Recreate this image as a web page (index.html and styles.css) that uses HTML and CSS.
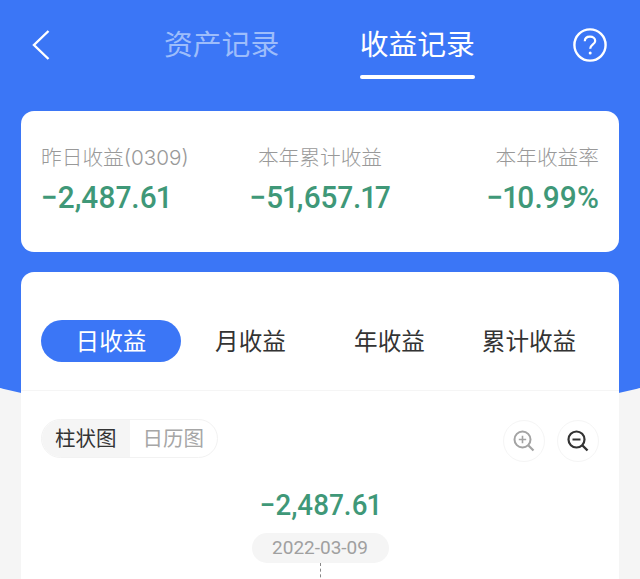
FILE: index.html
```html
<!DOCTYPE html>
<html lang="zh-CN">
<head>
    <meta charset="UTF-8">
    <meta name="viewport" content="width=device-width, initial-scale=1.0">
    <title>收益记录</title>
    <link rel="stylesheet" href="styles.css">
</head>
<body>
    <div class="page">
        <header class="nav">
            <svg class="nav-back" width="18" height="30" viewBox="0 0 18 30">
                <path d="M16.5 1 L2 15 L16.5 29" fill="none" stroke="#fff" stroke-width="2.4"/>
            </svg>
            <div class="nav-tabs">
                <span class="nav-tab">资产记录</span>
                <span class="nav-tab nav-tab-active">收益记录</span>
            </div>
            <svg class="nav-help" width="34" height="34" viewBox="0 0 34 34">
                <circle cx="17" cy="17" r="15.6" fill="none" stroke="#fff" stroke-width="2.4"/>
                <path d="M11.8 13.2 C11.8 10 14.2 8.6 17 8.6 C20 8.6 22.2 10.4 22.2 13 C22.2 16.4 17.2 16.6 17.2 20.8" fill="none" stroke="#fff" stroke-width="2.2"/>
                <circle cx="17.2" cy="25" r="1.5" fill="#fff"/>
            </svg>
        </header>

        <section class="summary">
            <div class="stat">
                <div class="stat-label">昨日收益(0309)</div>
                <div class="stat-value">−2,487.61</div>
            </div>
            <div class="stat stat-center">
                <div class="stat-label">本年累计收益</div>
                <div class="stat-value">−51,657.17</div>
            </div>
            <div class="stat stat-right">
                <div class="stat-label">本年收益率</div>
                <div class="stat-value">−10.99%</div>
            </div>
        </section>

        <section class="panel">
            <div class="period-tabs">
                <span class="period-tab period-tab-active">日收益</span>
                <span class="period-tab">月收益</span>
                <span class="period-tab">年收益</span>
                <span class="period-tab">累计收益</span>
            </div>

            <div class="chart-tools">
                <div class="segment">
                    <span class="segment-item segment-item-active">柱状图</span>
                    <span class="segment-item">日历图</span>
                </div>
                <div class="zoom-btns">
                    <span class="zoom-btn">
                        <svg width="22" height="22" viewBox="0 0 22 22">
                            <circle cx="9.5" cy="9.5" r="8" fill="none" stroke="#a3a3a3" stroke-width="2"/>
                            <path d="M15.5 15.5 L20.5 20.5" stroke="#a3a3a3" stroke-width="2.2"/>
                            <path d="M5.8 9.5 H13.2 M9.5 5.8 V13.2" stroke="#a3a3a3" stroke-width="1.6"/>
                        </svg>
                    </span>
                    <span class="zoom-btn">
                        <svg width="22" height="22" viewBox="0 0 22 22">
                            <circle cx="9.5" cy="9.5" r="8" fill="none" stroke="#333" stroke-width="2.2"/>
                            <path d="M15.5 15.5 L20.5 20.5" stroke="#333" stroke-width="2.4"/>
                            <path d="M5.5 9.5 H13.5" stroke="#333" stroke-width="2"/>
                        </svg>
                    </span>
                </div>
            </div>

            <div class="chart-head">
                <div class="chart-value">−2,487.61</div>
                <div class="chart-date">2022-03-09</div>
                <div class="chart-line"></div>
            </div>
        </section>
    </div>
</body>
</html>
```

FILE: styles.css
```css
html, body {
    margin: 0;
    height: 100%;
    overflow: hidden;
}
body {
    font-family: "Noto Sans CJK SC", Roboto, sans-serif;
    background-color: #f5f5f5;
}
.page {
    position: relative;
    height: 579px;
    overflow: hidden;
    padding: 0 21px 0 21px;
    box-sizing: border-box;
}
/* blue backdrop with the curved bottom edge */
.page::before {
    content: "";
    position: absolute;
    z-index: 0;
    top: 0;
    left: -180px;
    width: 1000px;
    height: 422px;
    background-color: #3b76f6;
    border-radius: 0 0 500px 500px / 0 0 147px 147px;
}
.nav, .summary, .panel {
    position: relative;
    z-index: 1;
}

.nav {
    display: flex;
    align-items: flex-start;
    height: 111px;
    padding: 0 12px 0 11px;
    box-sizing: border-box;
}
.nav-back {
    margin-top: 30px;
}
.nav-help {
    margin-top: 28px;
    margin-left: auto;
}
.nav-tabs {
    display: flex;
    gap: 80.5px;
    margin: 20px 0 0 114px;
}
.nav-tab {
    font-size: 28.8px;
    line-height: 46px;
    color: #9dbdfb;
}
.nav-tab-active {
    color: #fff;
    position: relative;
}
.nav-tab-active::after {
    content: "";
    position: absolute;
    left: 0;
    right: 0;
    top: 55px;
    height: 4px;
    border-radius: 2px;
    background: #fff;
}

.summary {
    display: grid;
    grid-template-columns: repeat(3, 1fr);
    height: 141px;
    padding: 34px 20px 0;
    box-sizing: border-box;
    background: #fff;
    border-radius: 13px;
}
.stat-center {
    text-align: center;
}
.stat-right {
    text-align: right;
}
.stat-label {
    font-family: Inter, "Noto Sans CJK SC", sans-serif;
    font-size: 20.7px;
    line-height: 26px;
    color: #999;
    font-weight: 300;
    white-space: nowrap;
}
/* the numbers are a condensed face in the original, Roboto squeezed a little */
.stat-value {
    margin-top: 9px;
    font-family: Roboto, sans-serif;
    font-size: 31px;
    line-height: 36px;
    font-weight: 500;
    font-feature-settings: "pnum";
    color: #3f9878;
    transform: scaleX(0.96);
    transform-origin: left center;
}
.stat-center .stat-value {
    transform-origin: center;
}
.stat-right .stat-value {
    transform-origin: right center;
}

.panel {
    margin-top: 20px;
    height: 320px;
    background: #fff;
    border-radius: 13px 13px 0 0;
}
.period-tabs {
    display: grid;
    grid-template-columns: 140px 139px 139px 140px;
    padding: 48px 20px 28px;
    border-bottom: 1px solid #f5f5f5;
}
.period-tab {
    height: 42px;
    line-height: 40px;
    text-align: center;
    font-size: 23.6px;
    color: #333;
    border-radius: 21px;
}
.period-tab-active {
    color: #fff;
    background-color: #3b76f6;
}

.chart-tools {
    display: flex;
    justify-content: space-between;
    align-items: flex-start;
    padding: 28px 20px 0;
}
.segment {
    display: flex;
    height: 39px;
    box-sizing: border-box;
    border: 1px solid #f2f2f2;
    border-radius: 20px;
    overflow: hidden;
}
.segment-item {
    width: 87.5px;
    line-height: 35px;
    text-align: center;
    font-size: 20.5px;
    color: #a6a6a6;
}
.segment-item-active {
    color: #333;
    background-color: #f5f5f5;
}
.zoom-btns {
    display: flex;
    gap: 12px;
    margin-top: 1px;
}
.zoom-btn {
    display: flex;
    align-items: center;
    justify-content: center;
    width: 42px;
    height: 42px;
    box-sizing: border-box;
    border: 1px solid #f5f5f5;
    border-radius: 50%;
}

.chart-head {
    display: flex;
    flex-direction: column;
    align-items: center;
    margin-top: 26px;
}
.chart-value {
    font-family: Roboto, sans-serif;
    font-size: 29px;
    line-height: 34px;
    font-weight: 500;
    font-feature-settings: "pnum";
    color: #3f9878;
    transform: scaleX(0.955);
}
.chart-date {
    margin-top: 11px;
    width: 137px;
    height: 30px;
    line-height: 29px;
    text-align: center;
    font-family: Roboto, sans-serif;
    font-size: 19px;
    color: #a0a0a0;
    background-color: #f5f5f5;
    border-radius: 15px;
}
.chart-line {
    height: 20px;
    border-left: 1px dashed #888;
}
```
